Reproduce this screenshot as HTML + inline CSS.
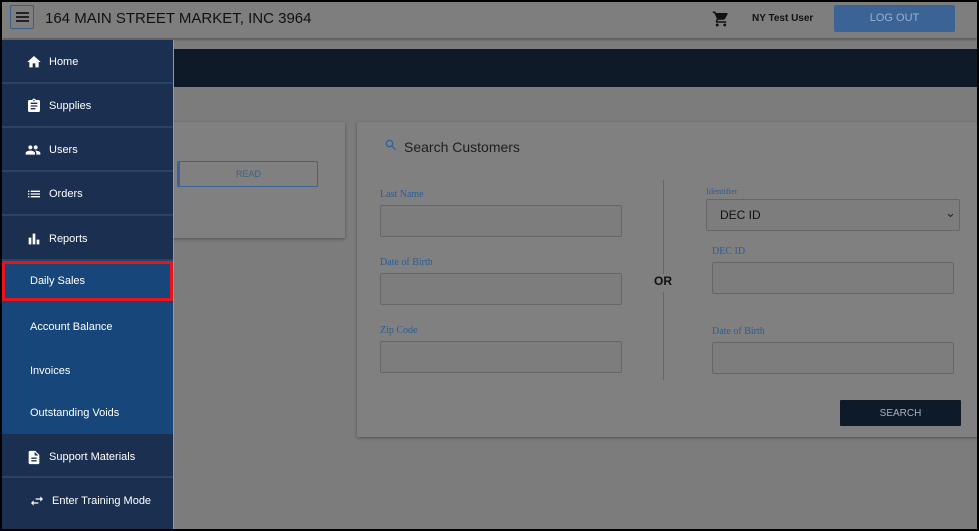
<!DOCTYPE html>
<html><head><style>
*{margin:0;padding:0;box-sizing:border-box}
body{width:979px;height:531px;overflow:hidden;background:#000;font-family:"Liberation Sans",sans-serif;position:relative}
.frame{position:absolute;left:2px;top:2px;width:975px;height:527px;background:#7b7c7b;overflow:hidden}
.abs{position:absolute}
.hdr{left:0;top:0;width:975px;height:36px;background:#7e7e7e;box-shadow:0 2px 2px rgba(0,0,0,.25)}
.band{left:0;top:47px;width:975px;height:38px;background:#0f1a29}
.card{background:#808080;box-shadow:0 1px 3px rgba(0,0,0,.35)}
.lbl{font-family:"Liberation Serif",serif;font-size:10px;color:#2d5c94}
.inp{border:1px solid #666;border-radius:2px;background:#7d7d7d}
.side{left:0;top:38px;width:172px;height:489px;background:#1a2f4d;border-right:1px solid #8a9bb0}
.it{position:absolute;left:0;width:171px;color:#fff;font-size:11px;display:flex;align-items:center}
.top{background:#1b3050;border-bottom:2px solid #2a4263}
.sub{background:#17467b;padding-left:28px}
.ic{width:47px;display:flex;justify-content:flex-end;padding-right:7px}
</style></head><body>
<div class="frame">
<div class="abs hdr">
  <div class="abs" style="left:8px;top:3px;width:24px;height:24px;border:1px solid #3a5f8c;border-radius:2px"></div>
  <div class="abs" style="left:14px;top:10px;width:13px;height:2px;background:#222;box-shadow:0 4px 0 #222,0 8px 0 #222"></div>
  <div class="abs" style="left:43px;top:8px;font-size:15px;color:#111">164 MAIN STREET MARKET, INC 3964</div>
  <svg class="abs" style="left:710px;top:8px" width="18" height="18" viewBox="0 0 24 24"><path fill="#111" d="M7 18c-1.1 0-2 .9-2 2s.9 2 2 2 2-.9 2-2-.9-2-2-2zM1 2v2h2l3.6 7.6-1.4 2.4c-.1.3-.2.6-.2 1 0 1.1.9 2 2 2h12v-2H7.4c-.1 0-.2-.1-.2-.2v-.1l.9-1.7h7.4c.8 0 1.4-.4 1.7-1l3.6-6.5c.1-.2.1-.3.1-.5 0-.6-.4-1-1-1H5.2l-.9-2H1zm16 16c-1.1 0-2 .9-2 2s.9 2 2 2 2-.9 2-2-.9-2-2-2z"/></svg>
  <div class="abs" style="left:750px;top:11px;font-size:10px;font-weight:bold;color:#111">NY Test User</div>
  <div class="abs" style="left:832px;top:3px;width:121px;height:27px;background:#3b6396;border-radius:2px;color:#9db1c9;font-size:11px;text-align:center;line-height:27px">LOG OUT</div>
</div>
<div class="abs band"></div>
<div class="abs card" style="left:150px;top:120px;width:193px;height:116px"></div>
<div class="abs" style="left:175px;top:159px;width:141px;height:26px;border:1px solid #3b6396;border-left:3px solid #3b6396;border-radius:2px;color:#3e5f88;font-size:9px;text-align:center;line-height:24px">READ</div>
<div class="abs card" style="left:355px;top:120px;width:625px;height:315px">
  <svg class="abs" style="left:27px;top:16px" width="14" height="14" viewBox="0 0 24 24"><path fill="#2d5c94" d="M15.5 14h-.8l-.3-.3A6.5 6.5 0 1 0 9.5 16c1.6 0 3.1-.6 4.2-1.6l.3.3v.8l5 5 1.5-1.5-5-5zm-6 0C7 14 5 12 5 9.5S7 5 9.5 5 14 7 14 9.5 12 14 9.5 14z"/></svg>
  <div class="abs" style="left:47px;top:17px;font-size:14px;color:#1e1e1e">Search Customers</div>
  <div class="abs lbl" style="left:23px;top:67px">Last Name</div>
  <div class="abs inp" style="left:23px;top:83px;width:242px;height:32px"></div>
  <div class="abs lbl" style="left:23px;top:135px">Date of Birth</div>
  <div class="abs inp" style="left:23px;top:151px;width:242px;height:32px"></div>
  <div class="abs lbl" style="left:23px;top:203px">Zip Code</div>
  <div class="abs inp" style="left:23px;top:219px;width:242px;height:32px"></div>
  <div class="abs" style="left:306px;top:58px;width:1px;height:200px;background:#666"></div>
  <div class="abs" style="left:294px;top:152px;width:24px;height:18px;background:#808080;font-size:12px;font-weight:bold;color:#111;text-align:center">OR</div>
  <div class="abs lbl" style="left:349px;top:64px;font-size:8.5px">Identifier</div>
  <div class="abs inp" style="left:349px;top:77px;width:254px;height:32px;font-size:12px;color:#111;line-height:30px;padding-left:13px">DEC ID<svg style="position:absolute;right:5px;top:13px" width="7" height="5" viewBox="0 0 7 5"><path d="M1 1l2.5 2.5L6 1" stroke="#222" fill="none"/></svg></div>
  <div class="abs lbl" style="left:355px;top:124px">DEC ID</div>
  <div class="abs inp" style="left:355px;top:140px;width:242px;height:32px"></div>
  <div class="abs lbl" style="left:355px;top:204px">Date of Birth</div>
  <div class="abs inp" style="left:355px;top:220px;width:242px;height:32px"></div>
  <div class="abs" style="left:483px;top:278px;width:121px;height:26px;background:#0f1a29;color:#a9b0b8;font-size:10px;text-align:center;line-height:28px;border-radius:1px">SEARCH</div>
</div>
<div class="abs side">
  <div class="it top" style="top:0;height:44px;padding-top:2px"><span class="ic"><svg width="16" height="16" viewBox="0 0 24 24"><path fill="#fff" d="M10 20v-6h4v6h5v-8h3L12 3 2 12h3v8z"/></svg></span>Home</div>
  <div class="it top" style="top:44px;height:44px;padding-top:2px"><span class="ic"><svg width="16" height="16" viewBox="0 0 24 24"><path fill="#fff" d="M19 3h-4.2C14.4 1.8 13.3 1 12 1s-2.4.8-2.8 2H5c-1.1 0-2 .9-2 2v14c0 1.1.9 2 2 2h14c1.1 0 2-.9 2-2V5c0-1.1-.9-2-2-2zm-7 0c.6 0 1 .4 1 1s-.4 1-1 1-1-.4-1-1 .4-1 1-1zm2 14H7v-2h7v2zm3-4H7v-2h10v2zm0-4H7V7h10v2z"/></svg></span>Supplies</div>
  <div class="it top" style="top:88px;height:44px;padding-top:2px"><span class="ic"><svg width="18" height="16" viewBox="0 0 24 24"><path fill="#fff" d="M16 11c1.7 0 3-1.3 3-3s-1.3-3-3-3-3 1.3-3 3 1.3 3 3 3zm-8 0c1.7 0 3-1.3 3-3S9.7 5 8 5 5 6.3 5 8s1.3 3 3 3zm0 2c-2.3 0-7 1.2-7 3.5V19h14v-2.5c0-2.3-4.7-3.5-7-3.5zm8 0c-.3 0-.6 0-1 .1 1.2.8 2 2 2 3.4V19h6v-2.5c0-2.3-4.7-3.5-7-3.5z"/></svg></span>Users</div>
  <div class="it top" style="top:132px;height:44px;padding-top:2px"><span class="ic"><svg width="16" height="16" viewBox="0 0 24 24"><path fill="#fff" d="M3 13h2v-2H3v2zm0 4h2v-2H3v2zm0-8h2V7H3v2zm4 4h14v-2H7v2zm0 4h14v-2H7v2zM7 7v2h14V7H7z"/></svg></span>Orders</div>
  <div class="it top" style="top:176px;height:45px;padding-top:2px"><span class="ic"><svg width="16" height="16" viewBox="0 0 24 24"><path fill="#fff" d="M4 10h4v10H4zM10 4h4v16h-4zM16 13h4v7h-4z"/></svg></span>Reports</div>
  <div class="it sub" style="top:221px;height:40px;border:3px solid #e8141c;padding-left:25px">Daily Sales</div>
  <div class="it sub" style="top:261px;height:48px;padding-top:4px">Account Balance</div>
  <div class="it sub" style="top:309px;height:43px">Invoices</div>
  <div class="it sub" style="top:352px;height:42px">Outstanding Voids</div>
  <div class="it top" style="top:394px;height:44px;padding-top:4px"><span class="ic"><svg width="16" height="17" viewBox="0 0 24 24"><path fill="#fff" d="M14 2H6c-1.1 0-2 .9-2 2v16c0 1.1.9 2 2 2h12c1.1 0 2-.9 2-2V8l-6-6zm2 16H8v-2h8v2zm0-4H8v-2h8v2zm-3-5V3.5L18.5 9H13z"/></svg></span>Support Materials</div>
  <div class="it" style="top:438px;height:44px;background:#1b3050;padding-top:2px"><span class="ic" style="width:50px"><svg width="16" height="16" viewBox="0 0 24 24"><path fill="#fff" d="M6.99 11L3 15l3.99 4v-3H14v-2H6.99v-3zM21 9l-3.99-4v3H10v2h7.01v3L21 9z"/></svg></span>Enter Training Mode</div>
  <div class="abs" style="left:0;top:482px;width:171px;height:7px;background:#1b3050"></div>
</div>
</div>
</body></html>
